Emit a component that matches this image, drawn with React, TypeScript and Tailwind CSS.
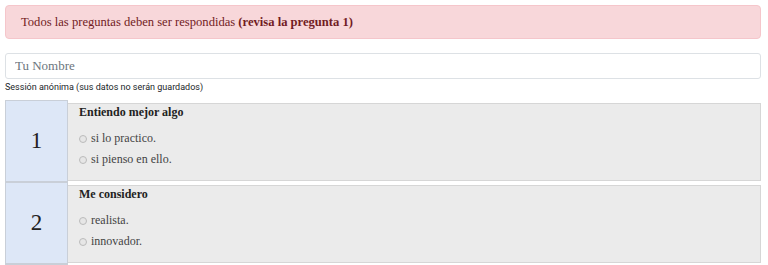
import React from "react";

const slab = { fontFamily: '"Roboto Slab", "Liberation Serif", "DejaVu Serif", serif' };

const questions = [
  { n: 1, title: "Entiendo mejor algo", options: ["si lo practico.", "si pienso en ello."] },
  { n: 2, title: "Me considero", options: ["realista.", "innovador."] },
];

export default function App() {
  return (
    <div className="w-[768px] h-[265px] overflow-hidden bg-white" style={slab}>
      <div className="ml-[5px] w-[756px] pt-[5px]">
        <div className="h-[34px] flex items-center pl-[15px] rounded-[4px] border border-[#f5c6cb] bg-[#f8d7da] text-[12.6px] text-[#721c24]">
          <span>
            Todos las preguntas deben ser respondidas <b className="font-bold">(revisa la pregunta 1)</b>
          </span>
        </div>

        <input
          placeholder="Tu Nombre"
          className="mt-[14px] block w-full h-[26px] px-[9px] rounded-[3px] border border-[#dde1e5] text-[13px] text-[#495057] placeholder:text-[#6c757d] focus:outline-none"
          style={slab}
        />
        <p className="mt-[2px] text-[9px] leading-[12px] text-[#212529]" style={{ fontFamily: 'Roboto, "Liberation Sans", sans-serif' }}>
          Sessión anónima (sus datos no serán guardados)
        </p>

        <div className="mt-[7px]">
          {questions.map((q) => (
            <div key={q.n} className="flex h-[82px]">
              <div className="w-[63px] shrink-0 flex items-center justify-center bg-[#dde7f7] border border-[#c9cfd8] text-[23px] text-[#222]">
                {q.n}
              </div>
              <div className="flex-1 mt-[3px] mb-[1px] bg-[#ebebeb] border border-[#d6d6d6] border-l-0 pl-[11px] pt-0">
                <div className="text-[12px] font-bold text-[#222] leading-[16px]">{q.title}</div>
                <div className="mt-[11px] flex flex-col gap-[6px]">
                  {q.options.map((o) => (
                    <label key={o} className="flex items-center gap-[4px] text-[12px] text-[#444] leading-[15px]">
                      <span className="w-[8px] h-[8px] rounded-full border border-[#bbb] bg-[#e6e6e6]" />
                      {o}
                    </label>
                  ))}
                </div>
              </div>
            </div>
          ))}
          <div className="flex h-[10px]">
            <div className="w-[63px] shrink-0 bg-[#dde7f7] border border-[#c9cfd8]" />
          </div>
        </div>
      </div>
    </div>
  );
}
